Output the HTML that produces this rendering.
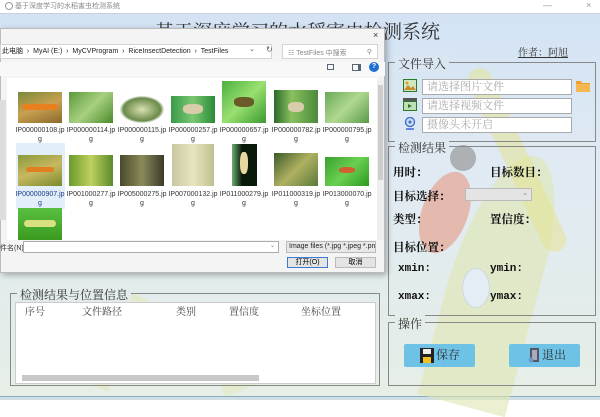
<!DOCTYPE html>
<html><head><meta charset="utf-8"><style>
*{margin:0;padding:0;box-sizing:border-box}
body{width:600px;height:400px;overflow:hidden;position:relative;font-family:"Liberation Sans","Noto Sans CJK SC",sans-serif;background:#fff}
.abs{position:absolute}
.serif{font-family:"Liberation Serif","Noto Serif CJK SC",serif}
.gb{position:absolute;border:1px solid #888}
.gbt{position:absolute;top:-8px;left:6px;padding:0 3px;font-size:12px;color:#333;font-family:"Liberation Serif","Noto Serif CJK SC",serif}
.in{position:absolute;height:16px;border:1px solid #aaa;background:#fff;font-size:11px;color:#aaa;padding-left:4px;line-height:14px;font-family:"Liberation Serif","Noto Serif CJK SC",serif}
.lb{position:absolute;font-size:11.5px;font-weight:bold;color:#111;font-family:"Liberation Serif","Noto Serif CJK SC",serif}
.mono{font-family:"Liberation Mono",monospace;font-size:11px;font-weight:bold}
.th{position:absolute;}
.cap{position:absolute;font-size:7px;color:#333;text-align:center;width:52px;line-height:9px}
</style></head><body>
<div class="abs" style="left:0;top:14px;width:600px;height:386px;background:linear-gradient(180deg,#d3e3f4 0%,#e0eaf3 40%,#e6eee6 100%)"></div>
<div class="abs" style="left:0;top:396px;width:600px;height:4px;background:#cfe0e4;border-top:1px solid #8ab"></div>
<!-- leaves -->
<div class="abs" style="left:450px;top:150px;width:90px;height:260px;background:#dfe6b0;opacity:.6;border-radius:60% 40% 0 0;transform:rotate(15deg)"></div>
<div class="abs" style="left:505px;top:60px;width:24px;height:200px;background:#e6e48a;opacity:.5;transform:rotate(-25deg);border-radius:20px"></div>
<div class="abs" style="left:100px;top:290px;width:30px;height:100px;background:#dfe6b0;opacity:.5;transform:rotate(25deg)"></div>
<div class="abs" style="left:210px;top:310px;width:50px;height:80px;background:#dfe8b8;opacity:.5;transform:rotate(-20deg)"></div>
<!-- ladybug -->
<div class="abs" style="left:422px;top:170px;width:46px;height:85px;background:#e4a898;border-radius:50%;transform:rotate(20deg);opacity:.75"></div>
<div class="abs" style="left:450px;top:145px;width:26px;height:26px;background:#999;border-radius:50%;opacity:.7"></div>
<div class="abs" style="left:462px;top:268px;width:28px;height:40px;background:#e4edf4;border-radius:50%;border:1px solid #cdd9e2"></div>
<!-- title bar -->
<div class="abs" style="left:0;top:0;width:600px;height:14px;background:#fff;border-bottom:1px solid #ccd"></div>
<div class="abs" style="left:5px;top:2px;width:8px;height:8px;border:1px solid #999;border-radius:50%"></div>
<div class="abs" style="left:15px;top:1px;font-size:7px;color:#888">基于深度学习的水稻害虫检测系统</div>
<div class="abs" style="left:543px;top:0;font-size:9px;color:#999">—</div>
<div class="abs" style="left:586px;top:0;font-size:9px;color:#999">×</div>
<!-- big title -->
<div class="abs serif" style="left:155px;top:17px;font-size:19px;color:#333">基于深度学习的水稻害虫检测系统</div>
<div class="abs serif" style="left:518px;top:44px;font-size:10px;color:#333;text-decoration:underline">作者：阿旭</div>
<!-- right groupboxes -->
<div class="gb" style="left:388px;top:62px;width:208px;height:80px"><div class="gbt" style="background:#dae6f2">文件导入</div></div>
<svg class="abs" style="left:403px;top:79px" width="14" height="13"><rect x=".5" y=".5" width="13" height="12" fill="#cfe8c2" stroke="#2a7a2a"/><path d="M1 11 L5 6 L8 9 L10 7 L13 11Z" fill="#c88a2a"/><circle cx="4" cy="4" r="1.5" fill="#e8a020"/></svg>
<div class="in" style="left:422px;top:79px;width:150px">请选择图片文件</div>
<svg class="abs" style="left:576px;top:79px" width="14" height="13"><path d="M0 2h5l1 2h8v9H0z" fill="#f0a030"/><rect x="0" y="5" width="14" height="8" fill="#f5b850"/></svg>
<svg class="abs" style="left:403px;top:98px" width="14" height="13"><rect x=".5" y="3.5" width="13" height="9" fill="#bfe0b5" stroke="#2a7a2a"/><rect x="0" y="0" width="14" height="3" fill="#555"/><path d="M5 6 L9 8 L5 10Z" fill="#2a7a2a"/></svg>
<div class="in" style="left:422px;top:98px;width:150px">请选择视频文件</div>
<svg class="abs" style="left:404px;top:117px" width="12" height="13"><circle cx="6" cy="5" r="4.5" fill="#cde" stroke="#3a6ad0" stroke-width="1.3"/><circle cx="6" cy="5" r="1.5" fill="#3a6ad0"/><path d="M2 12h8" stroke="#3a6ad0" stroke-width="1.5"/></svg>
<div class="in" style="left:422px;top:117px;width:150px">摄像头未开启</div>

<div class="gb" style="left:388px;top:146px;width:208px;height:170px"><div class="gbt" style="background:#dfe9f2">检测结果</div></div>
<div class="lb" style="left:393px;top:164px">用时：</div>
<div class="lb" style="left:490px;top:164px">目标数目：</div>
<div class="lb" style="left:393px;top:188px">目标选择：</div>
<div class="abs" style="left:465px;top:188px;width:67px;height:13px;background:#e4e4e4;border:1px solid #bbb;font-size:7px;color:#888;text-align:right;padding-right:3px">⌄</div>
<div class="lb" style="left:393px;top:211px">类型：</div>
<div class="lb" style="left:490px;top:211px">置信度：</div>
<div class="lb" style="left:393px;top:239px">目标位置：</div>
<div class="lb mono" style="left:398px;top:263px">xmin:</div>
<div class="lb mono" style="left:490px;top:263px">ymin:</div>
<div class="lb mono" style="left:398px;top:291px">xmax:</div>
<div class="lb mono" style="left:490px;top:291px">ymax:</div>

<div class="gb" style="left:388px;top:322px;width:208px;height:64px"><div class="gbt" style="background:#e4ece8">操作</div></div>
<div class="abs serif" style="left:404px;top:344px;width:71px;height:23px;background:#6ec2e6;border-radius:2px;font-size:12px;color:#333;line-height:23px;padding-left:32px">保存</div>
<svg class="abs" style="left:420px;top:348px" width="14" height="15"><rect width="14" height="15" fill="#222"/><rect x="3" y="1" width="8" height="5" fill="#eee"/><rect x="3" y="9" width="8" height="6" fill="#f0c020"/></svg>
<div class="abs serif" style="left:509px;top:344px;width:71px;height:23px;background:#6ec2e6;border-radius:2px;font-size:12px;color:#333;line-height:23px;padding-left:33px">退出</div>
<svg class="abs" style="left:528px;top:348px" width="12" height="15"><rect x="2" y="0" width="9" height="14" fill="#556" /><rect x="4" y="2" width="5" height="10" fill="#aab"/><circle cx="3" cy="12" r="2.5" fill="#69c"/></svg>

<div class="gb" style="left:10px;top:293px;width:370px;height:93px"><div class="gbt" style="background:#e3ebec">检测结果与位置信息</div></div>
<div class="abs" style="left:15px;top:302px;width:361px;height:82px;background:#fff;border:1px solid #ccc"></div>
<div class="abs serif" style="left:15px;top:303px;width:340px;height:14px;font-size:10px;color:#444">
<span class="abs" style="left:10px">序号</span><span class="abs" style="left:67px">文件路径</span><span class="abs" style="left:161px">类别</span><span class="abs" style="left:214px">置信度</span><span class="abs" style="left:286px">坐标位置</span></div>
<div class="abs" style="left:22px;top:375px;width:237px;height:6px;background:#c8c8c8"></div>

<!-- dialog -->
<div class="abs" style="left:0;top:28px;width:385px;height:245px;background:#f4f4f4;border:1px solid #bbb;box-shadow:2px 2px 6px rgba(0,0,0,.3)"></div>
<div class="abs" style="left:373px;top:30px;font-size:9px;color:#333">×</div>
<div class="abs" style="left:0;top:44px;width:272px;height:15px;background:#fff;border:1px solid #d4d4d4"></div>
<div class="abs" style="left:2px;top:46px;font-size:7px;color:#222;white-space:nowrap">此电脑 &nbsp;› &nbsp;MyAI (E:) &nbsp;› &nbsp;MyCVProgram &nbsp;› &nbsp;RiceInsectDetection &nbsp;› &nbsp;TestFiles</div>
<div class="abs" style="left:249px;top:45px;font-size:7px;color:#555">⌄</div>
<div class="abs" style="left:266px;top:45px;font-size:8px;color:#555">↻</div>
<div class="abs" style="left:282px;top:44px;width:96px;height:15px;background:#fff;border:1px solid #d4d4d4;font-size:7px;color:#888;padding:3px 5px">☷ TestFiles 中搜索<span style="float:right">⚲</span></div>
<div class="abs" style="left:0;top:62px;width:385px;height:14px;background:#f8f8f8"></div>
<div class="abs" style="left:327px;top:64px;width:7px;height:6px;border:1px solid #567"></div>
<div class="abs" style="left:352px;top:64px;width:9px;height:7px;border:1px solid #567;border-right-width:3px"></div>
<div class="abs" style="left:369px;top:62px;width:10px;height:10px;border-radius:50%;background:#1e6fd0;color:#fff;font-size:7px;text-align:center;line-height:10px;font-weight:bold">?</div>
<div class="abs" style="left:7px;top:78px;width:370px;height:162px;background:#fff"></div>
<div class="abs" style="left:377px;top:80px;width:7px;height:160px;background:#eee"></div>
<div class="abs" style="left:378px;top:85px;width:5px;height:95px;background:#cdcdcd"></div>
<div class="abs" style="left:0;top:100px;width:6px;height:120px;background:#ddd"></div>
<div class="th" style="left:18px;top:92px;width:44px;height:31px;background:linear-gradient(160deg,#7a8a3a,#c8a050 50%,#8a6a2a)"><div style="margin:12px 4px;height:6px;background:#e88020;border-radius:3px"></div></div>
<div class="th" style="left:69px;top:92px;width:44px;height:31px;background:linear-gradient(135deg,#5a9a3a,#a8d080 50%,#4a8a2a)"></div>
<div class="th" style="left:120px;top:96px;width:44px;height:27px;background:radial-gradient(ellipse,#d8e0b0,#6a8a4a 60%,#fff 72%)"></div>
<div class="th" style="left:171px;top:96px;width:44px;height:27px;background:linear-gradient(90deg,#3a9a4a,#7ac870,#2a8a3a)"><div style="margin:8px 12px;height:10px;background:#d8ccaa;border-radius:40%"></div></div>
<div class="th" style="left:222px;top:81px;width:44px;height:42px;background:linear-gradient(135deg,#4ab040,#9ae070 50%,#3a9a30)"><div style="margin:16px 12px;height:10px;background:#6a5a2a;border-radius:40%"></div></div>
<div class="th" style="left:274px;top:90px;width:44px;height:33px;background:linear-gradient(90deg,#2a6a2a,#8ac060 40%,#4a8a3a)"><div style="margin:12px 14px;height:10px;background:#d8ccaa;border-radius:40%"></div></div>
<div class="th" style="left:325px;top:92px;width:44px;height:31px;background:linear-gradient(135deg,#6aaa5a,#b0d890,#5a9a4a)"></div>
<div class="cap" style="left:14px;top:126px">IP000000108.jp<br>g</div>
<div class="cap" style="left:65px;top:126px">IP000000114.jp<br>g</div>
<div class="cap" style="left:116px;top:126px">IP000000115.jp<br>g</div>
<div class="cap" style="left:167px;top:126px">IP000000257.jp<br>g</div>
<div class="cap" style="left:218px;top:126px">IP000000657.jp<br>g</div>
<div class="cap" style="left:270px;top:126px">IP000000782.jp<br>g</div>
<div class="cap" style="left:321px;top:126px">IP000000795.jp<br>g</div>
<div class="abs" style="left:16px;top:143px;width:49px;height:66px;background:#e2eefa"></div>
<div class="th" style="left:18px;top:155px;width:44px;height:31px;background:linear-gradient(160deg,#8a9a3a,#c8b860 50%,#7a8a2a)"><div style="margin:12px 8px;height:5px;background:#e08020;border-radius:3px"></div></div>
<div class="th" style="left:69px;top:155px;width:44px;height:31px;background:linear-gradient(90deg,#6a9a2a,#c0d060,#5a8a2a)"></div>
<div class="th" style="left:120px;top:155px;width:44px;height:31px;background:linear-gradient(90deg,#4a4a2a,#8a8a5a,#3a3a2a)"></div>
<div class="th" style="left:172px;top:144px;width:42px;height:42px;background:linear-gradient(90deg,#c8c8a0,#e8e4c0,#c0c090)"></div>
<div class="th" style="left:232px;top:144px;width:25px;height:42px;background:linear-gradient(90deg,#6ab070,#0a1a0a 40%,#0a1a0a)"><div style="margin:8px 8px;height:22px;width:8px;background:#e8d8a0;border-radius:40%"></div></div>
<div class="th" style="left:274px;top:153px;width:44px;height:33px;background:linear-gradient(135deg,#3a5a2a,#b0b060 50%,#5a7a3a)"></div>
<div class="th" style="left:325px;top:157px;width:44px;height:29px;background:linear-gradient(135deg,#3aa030,#6ad050,#2a9a20)"><div style="margin:10px 14px;height:6px;background:#d06030;border-radius:40%"></div></div>
<div class="cap" style="left:14px;top:190px;color:#1a3a8a">IP000000907.jp<br>g</div>
<div class="cap" style="left:65px;top:190px">IP001000277.jp<br>g</div>
<div class="cap" style="left:116px;top:190px">IP005000275.jp<br>g</div>
<div class="cap" style="left:167px;top:190px">IP007000132.jp<br>g</div>
<div class="cap" style="left:218px;top:190px">IP011000279.jp<br>g</div>
<div class="cap" style="left:270px;top:190px">IP011000319.jp<br>g</div>
<div class="cap" style="left:321px;top:190px">IP013000070.jp<br>g</div>
<div class="th" style="left:18px;top:208px;width:44px;height:32px;background:linear-gradient(180deg,#5ac040,#3a9a20)"><div style="margin:12px 6px;height:7px;background:#d8e080;border-radius:4px"></div></div>
<div class="abs" style="left:0;top:243px;font-size:7px;color:#333">件名(N):</div>
<div class="abs" style="left:23px;top:241px;width:256px;height:12px;background:#fff;border:1px solid #aaa;font-size:6px;color:#777;text-align:right;padding-right:3px">⌄</div>
<div class="abs" style="left:286px;top:241px;width:90px;height:12px;background:#e8e8e8;border:1px solid #bbb;font-size:7px;color:#222;padding-left:2px;white-space:nowrap;overflow:hidden">Image files (*.jpg *.jpeg *.pn ⌄</div>
<div class="abs" style="left:287px;top:257px;width:41px;height:11px;background:#e4e4e4;border:1px solid #3a7ad0;font-size:7px;text-align:center;line-height:9px">打开(O)</div>
<div class="abs" style="left:335px;top:257px;width:41px;height:11px;background:#e4e4e4;border:1px solid #bbb;font-size:7px;text-align:center;line-height:9px">取消</div>
</body></html>
